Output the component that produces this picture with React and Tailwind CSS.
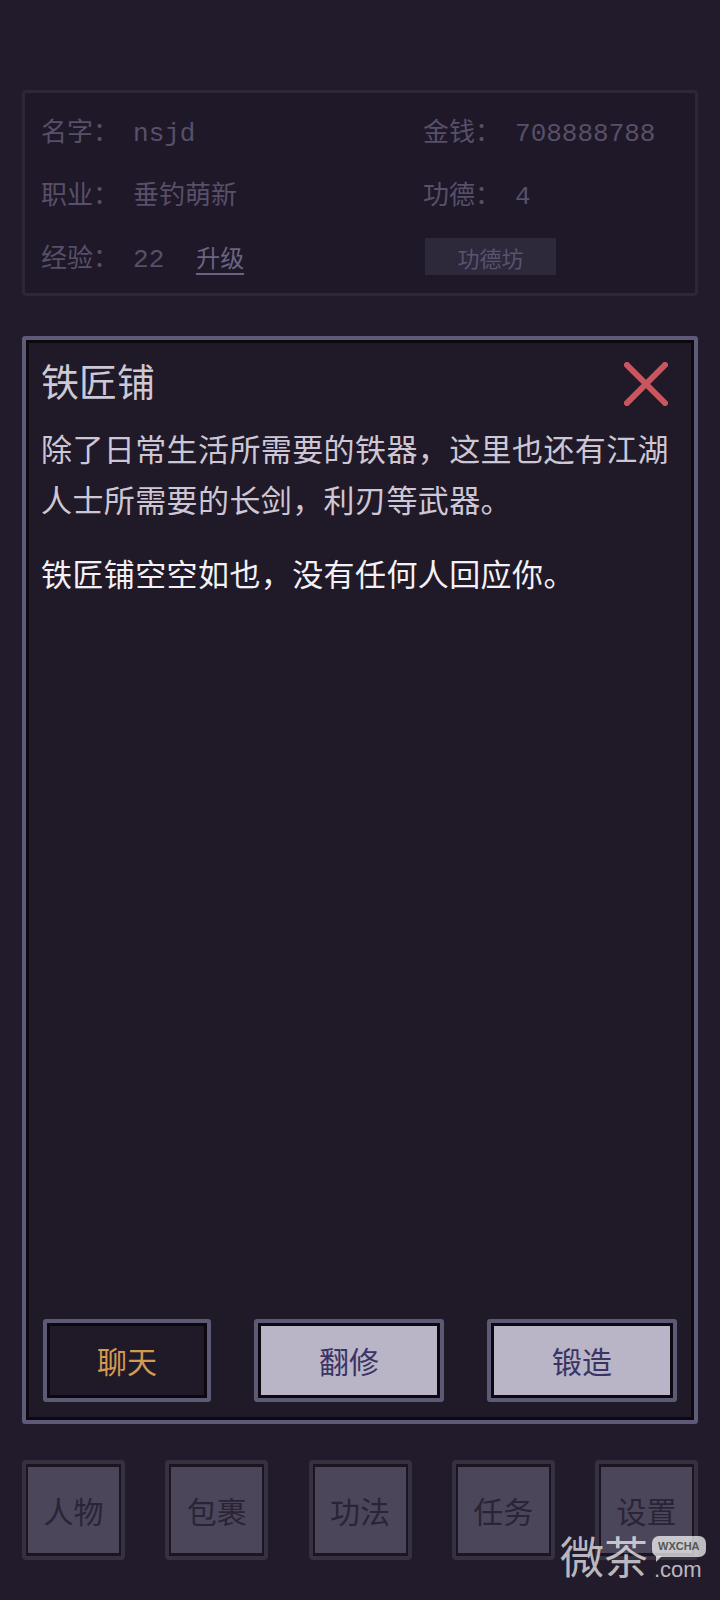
import { useState } from 'react'

const CJK = { fontFamily: '"Noto Sans CJK SC", "Noto Sans", sans-serif' }
const MONO = { fontFamily: '"Liberation Mono", "Noto Sans CJK SC", monospace' }
const SANS = { fontFamily: '"Liberation Sans", sans-serif' }

const NAV = ['人物', '包裹', '功法', '任务', '设置']

function CloseIcon() {
  return (
    <svg width="44" height="44" viewBox="0 0 44 44" className="block">
      <path d="M3 3 L41 41 M41 3 L3 41" stroke="#c9565f" strokeWidth="6" strokeLinecap="square" />
    </svg>
  )
}

function Field({ label, children }) {
  return (
    <div className="flex items-baseline h-[63px] pt-[13px]">
      <span style={CJK}>{label}：</span>
      {children}
    </div>
  )
}

function ActionButton({ label, active, width }) {
  return (
    <button className={`rounded-[3px] border-4 border-[#5d5a76] ${width} h-[83px]`}>
      <div
        className={`h-full border-[3px] border-[#0b080f] flex items-center justify-center text-[30px] ${
          active ? 'bg-[#201927] text-[#d49a52]' : 'bg-[#b9b5c6] text-[#3a3364]'
        }`}
        style={CJK}
      >
        {label}
      </div>
    </button>
  )
}

export default function App() {
  const [open, setOpen] = useState(true)

  return (
    <div className="min-h-[1600px] bg-[#221b2c] relative overflow-hidden" style={CJK}>
      <div className="pt-[90px] px-[22px]">
        {/* player info */}
        <div className="rounded-[4px] border-[3px] border-[#2d2739] bg-[#1f1828] pl-[16px] pt-[6px] pb-[5px] text-[26px] leading-[36px] text-[#575068]">
          <div className="grid grid-cols-[382px_1fr]">
            <Field label="名字">
              <span className="ml-[14px]" style={MONO}>nsjd</span>
            </Field>
            <Field label="金钱">
              <span className="ml-[14px]" style={MONO}>708888788</span>
            </Field>
            <Field label="职业">
              <span className="ml-[14px]">垂钓萌新</span>
            </Field>
            <Field label="功德">
              <span className="ml-[14px]" style={MONO}>4</span>
            </Field>
            <Field label="经验">
              <span className="ml-[14px]" style={MONO}>22</span>
              <span className="ml-[32px] text-[24px] text-[#6b6481] border-b-2 border-[#6b6481] leading-[32px]">升级</span>
            </Field>
            <div className="flex items-center h-[63px]">
              <button className="ml-[2px] w-[131px] h-[37px] bg-[#2e283b] text-[22px] text-[#5a5370] flex items-center justify-center">
                功德坊
              </button>
            </div>
          </div>
        </div>

        {/* location panel */}
        {open && (
          <div className="mt-[40px] rounded-[3px] border-4 border-[#5e5b78]">
            <div className="h-[1080px] border-[3px] border-[#0c0910] bg-[#201927] flex flex-col px-[12px] pt-[13px]">
              <div className="flex items-start justify-between pr-[11px]">
                <h1 className="text-[38px] leading-[48px] text-[#cdc8d6]">铁匠铺</h1>
                <button className="mt-[6px]" onClick={() => setOpen(false)}>
                  <CloseIcon />
                </button>
              </div>
              <p className="mt-[16px] text-[31px] leading-[51px] tracking-[0.4px] text-[#cdc7d5]">
                除了日常生活所需要的铁器，这里也还有江湖人士所需要的长剑，利刃等武器。
              </p>
              <p className="mt-[23px] text-[31px] leading-[51px] tracking-[0.4px] text-[#f3f1f5]">
                铁匠铺空空如也，没有任何人回应你。
              </p>
              <div className="mt-auto pb-[15px] px-[2px] flex justify-between">
                <ActionButton label="聊天" active width="w-[168px]" />
                <ActionButton label="翻修" width="w-[190px]" />
                <ActionButton label="锻造" width="w-[190px]" />
              </div>
            </div>
          </div>
        )}

        {/* bottom nav */}
        <div className="mt-[36px] flex justify-between">
          {NAV.map(n => (
            <div key={n} className="w-[103px] h-[100px] rounded-[4px] border-4 border-[#363041]">
              <div className="h-full border-y-[3px] border-x-2 border-[#1b1522] bg-[#4c465b] flex items-center justify-center text-[30px] text-[#2a2436]">
                {n}
              </div>
            </div>
          ))}
        </div>
      </div>

      {/* watermark */}
      <div className="absolute left-[560px] top-[1530px] flex items-stretch pointer-events-none">
        <span className="text-[44px] leading-[50px] text-white/70" style={CJK}>微茶</span>
        <div className="ml-[4px] h-[50px] flex flex-col justify-between pt-[6px]">
          <span className="relative rounded-[7px] bg-white/70 px-[6px] text-[11px] font-bold leading-[21px] text-[#555]" style={SANS}>
            WXCHA
            <span className="absolute -bottom-[5px] left-[4px] w-0 h-0 border-t-[6px] border-t-white/70 border-r-[6px] border-r-transparent" />
          </span>
          <span className="text-[22px] leading-[20px] text-white/70 ml-[2px]" style={SANS}>
            .com
          </span>
        </div>
      </div>
    </div>
  )
}
